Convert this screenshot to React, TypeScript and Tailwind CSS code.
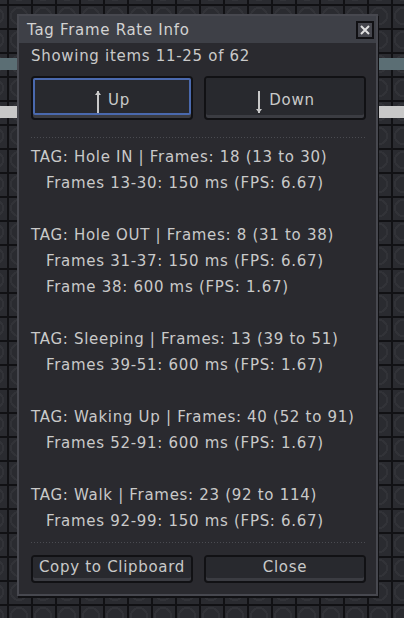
import type { ReactNode } from "react";

const lines: { text: string; indent?: boolean }[] = [
  { text: "TAG: Hole IN | Frames: 18 (13 to 30)" },
  { text: "Frames 13-30: 150 ms (FPS: 6.67)", indent: true },
  { text: "" },
  { text: "TAG: Hole OUT | Frames: 8 (31 to 38)" },
  { text: "Frames 31-37: 150 ms (FPS: 6.67)", indent: true },
  { text: "Frame 38: 600 ms (FPS: 1.67)", indent: true },
  { text: "" },
  { text: "TAG: Sleeping | Frames: 13 (39 to 51)" },
  { text: "Frames 39-51: 600 ms (FPS: 1.67)", indent: true },
  { text: "" },
  { text: "TAG: Waking Up | Frames: 40 (52 to 91)" },
  { text: "Frames 52-91: 600 ms (FPS: 1.67)", indent: true },
  { text: "" },
  { text: "TAG: Walk | Frames: 23 (92 to 114)" },
  { text: "Frames 92-99: 150 ms (FPS: 6.67)", indent: true },
];

function PixelButton({ children, focused, tall }: { children: ReactNode; focused?: boolean; tall?: boolean }) {
  return (
    <div className={`flex-1 rounded-[4px] border-2 border-[#111114] bg-[#3b3c42] pb-[3px] ${tall ? "h-[44px]" : "h-[28px]"}`}>
      <div
        className={`flex h-full items-center justify-center gap-[6px] rounded-[2px] bg-[#28292e] ${
          focused ? "border-2 border-[#4a69ae]" : ""
        } ${tall ? "pt-[8px]" : ""}`}
      >
        {children}
      </div>
    </div>
  );
}

function Arrow({ down }: { down?: boolean }) {
  return (
    <svg width="8" height="24" viewBox="0 0 8 24" className="mt-[2px]">
      <path d="M4 1 V23" stroke="#c9c9c9" strokeWidth="2" />
      {down ? (
        <path d="M1 19 H7 L4 23 Z" fill="#c9c9c9" />
      ) : (
        <path d="M1 5 H7 L4 1 Z" fill="#c9c9c9" />
      )}
    </svg>
  );
}

function Dotted() {
  return <div className="h-px bg-[repeating-linear-gradient(to_right,#4a4b51_0_1px,transparent_1px_3px)]" />;
}

export default function App() {
  return (
    <div className="relative h-[618px] w-[404px] overflow-hidden bg-[#2a2b30] bg-[linear-gradient(to_right,#111114_2px,transparent_2px),linear-gradient(to_bottom,#111114_2px,transparent_2px),radial-gradient(circle,transparent_7px,#323338_7px,#323338_9px,transparent_9px)] bg-size-[24px_24px] bg-position-[7px_4px] font-['DejaVu_Sans',sans-serif] text-[15px] tracking-[0.7px] text-[#c9c9c9]">
      {/* timeline bands behind the dialog */}
      <div className="h-[58px]" />
      <div className="h-[12px] bg-[#5b6e74]" />
      <div className="h-[36px]" />
      <div className="h-[12px] bg-[#c8c8c8]" />

      {/* dialog */}
      <div className="absolute left-[17px] top-[14px] w-[361px] border-2 border-[#47484f] bg-[#2a2a2f] shadow-[1px_2px_0_#111114]">
        <div className="flex h-[27px] items-center justify-between bg-[#3e4047] pl-[8px] pr-[2px] pt-px text-[#d2d2d2]">
          <span>Tag Frame Rate Info</span>
          <div className="flex h-[18px] w-[18px] items-center justify-center border-2 border-[#111114] bg-[#45464d]">
            <svg width="10" height="10" viewBox="0 0 10 10">
              <path d="M1 1 L9 9 M9 1 L1 9" stroke="#e0e0e0" strokeWidth="2" />
            </svg>
          </div>
        </div>

        <div className="flex flex-col pl-[12px] pr-[10px] pb-[11px]">
          <div className="h-[26px] leading-[26px]">Showing items 11-25 of 62</div>

          <div className="mt-[7px] flex gap-[11px]">
            <PixelButton focused tall>
              <Arrow />
              <span>Up</span>
            </PixelButton>
            <PixelButton tall>
              <Arrow down />
              <span>Down</span>
            </PixelButton>
          </div>

          <div className="mt-[17px]">
            <Dotted />
          </div>

          <div className="mt-[6px] flex flex-col">
            {lines.map((l, i) => (
              <div key={i} className={`h-[26px] whitespace-pre leading-[26px] ${l.indent ? "pl-[15px]" : ""}`}>
                {l.text}
              </div>
            ))}
          </div>

          <div className="mt-[8px]">
            <Dotted />
          </div>

          <div className="mt-[12px] flex gap-[11px]">
            <PixelButton>Copy to Clipboard</PixelButton>
            <PixelButton>Close</PixelButton>
          </div>
        </div>
      </div>
    </div>
  );
}
